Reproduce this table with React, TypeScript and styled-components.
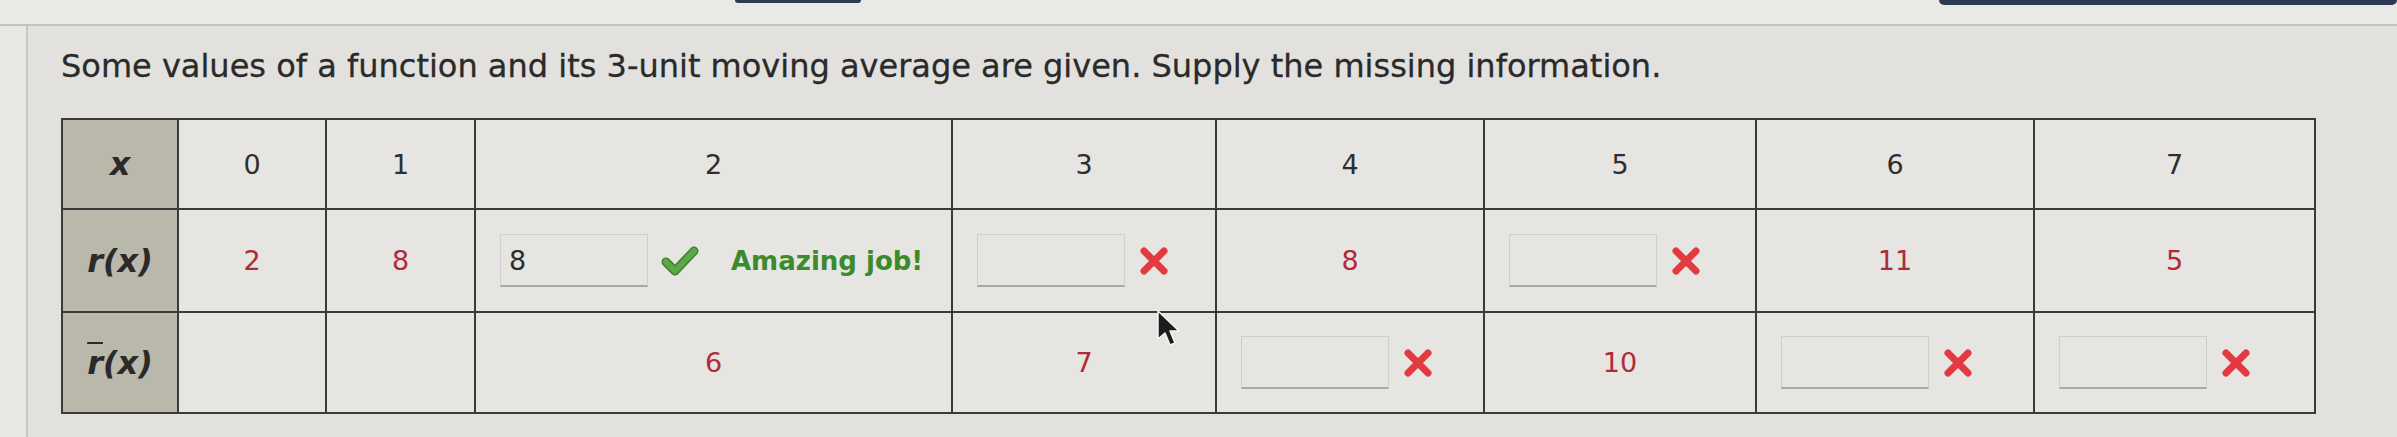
import React from "react";
import styled, { createGlobalStyle } from "styled-components";

const GlobalStyle = createGlobalStyle`
  html, body { margin: 0; padding: 0; background: #e2e1dd; }
  body { font-family: "DejaVu Sans", Verdana, sans-serif; color: #2e2e2e; }
`;

const Page = styled.div`
  width: 2397px;
  height: 437px;
  overflow: hidden;
  display: flex;
  flex-direction: column;
`;

const TopStrip = styled.div`
  height: 24px;
  flex: none;
  display: flex;
  align-items: flex-start;
  background: #e9e9e6;
  border-bottom: 2px solid #c2c2be;
`;

const Tab = styled.div<{ $left: number; $width: number; $h: number }>`
  margin-left: ${(p) => p.$left}px;
  width: ${(p) => p.$width}px;
  height: ${(p) => p.$h}px;
  background: #2d3a54;
  border-radius: 0 0 6px 6px;
`;

const Body = styled.div`
  flex: 1;
  display: flex;
`;

const Rail = styled.div`
  width: 26px;
  flex: none;
  background: #e7e7e4;
  border-right: 2px solid #c6c6c2;
`;

const Content = styled.div`
  padding-left: 33px;
  padding-top: 24px;
`;

const Prompt = styled.div`
  font-size: 32px;
  line-height: 32px;
  color: #2a2a2a;
  white-space: nowrap;
  -webkit-text-stroke: 0.3px #2a2a2a;
`;

const Table = styled.table`
  margin-top: 36px;
  border-collapse: collapse;
  table-layout: fixed;
  width: 2253px;
  border: 2px solid #3a3a3a;
`;

const Row = styled.tr<{ $h: number }>`
  height: ${(p) => p.$h}px;
`;

const HeadCell = styled.td`
  background: #bab7ab;
  border: 2px solid #3a3a3a;
  text-align: center;
  font-weight: bold;
  font-style: italic;
  font-size: 32px;
  color: #2a2a2a;
  padding: 0;
`;

const Cell = styled.td<{ $red?: boolean }>`
  position: relative;
  background: #e6e5e1;
  border: 2px solid #3a3a3a;
  text-align: center;
  font-size: 27px;
  color: ${(p) => (p.$red ? "#b02a3c" : "#2e2e2e")};
  padding: 0;
`;

const Answer = styled.div`
  display: flex;
  align-items: center;
  padding-left: 24px;
`;

const Box = styled.input`
  width: 148px;
  height: 53px;
  box-sizing: border-box;
  background: transparent;
  border: 1px solid #cfcfcb;
  border-bottom: 2px solid #a8a8a4;
  font-family: "DejaVu Sans", Verdana, sans-serif;
  font-size: 27px;
  color: #2e2e2e;
  padding: 0 8px;
  margin: 0;
  outline: none;
`;

const Mark = styled.svg`
  margin-left: 13px;
  flex: none;
`;

const Praise = styled.span`
  margin-left: 32px;
  font-weight: bold;
  font-size: 26px;
  color: #3b8a2c;
`;

const Bar = styled.span`
  text-decoration: overline;
  text-decoration-thickness: 2px;
`;

const Pointer = styled.svg`
  position: absolute;
  left: 203px;
  top: -4px;
`;

const Check = () => (
  <Mark width="38" height="30" viewBox="0 0 38 30">
    <path d="M5 16 L14 25 L33 5" fill="none" stroke="#3f7f31" strokeWidth="9" strokeLinecap="round" strokeLinejoin="round" />
    <path d="M5 16 L14 25 L33 5" fill="none" stroke="#5aa847" strokeWidth="6" strokeLinecap="round" strokeLinejoin="round" />
  </Mark>
);

const Cross = () => (
  <Mark width="32" height="32" viewBox="0 0 32 32">
    <path d="M6 6 L26 26 M26 6 L6 26" fill="none" stroke="#e23a40" strokeWidth="7" strokeLinecap="round" />
  </Mark>
);

const Wrong = () => (
  <Answer>
    <Box readOnly defaultValue="" />
    <Cross />
  </Answer>
);

const widths = [116, 148, 149, 477, 264, 268, 272, 278, 281];

export default function App() {
  return (
    <Page>
      <GlobalStyle />
      <TopStrip>
        <Tab $left={735} $width={127} $h={3} />
        <Tab $left={1078} $width={460} $h={5} />
      </TopStrip>
      <Body>
        <Rail />
        <Content>
          <Prompt>
            Some values of a function and its 3-unit moving average are given. Supply the missing information.
          </Prompt>
          <Table>
            <colgroup>
              {widths.map((w, i) => (
                <col key={i} style={{ width: w }} />
              ))}
            </colgroup>
            <tbody>
              <Row $h={90}>
                <HeadCell>x</HeadCell>
                {[0, 1, 2, 3, 4, 5, 6, 7].map((n) => (
                  <Cell key={n}>{n}</Cell>
                ))}
              </Row>
              <Row $h={103}>
                <HeadCell>r(x)</HeadCell>
                <Cell $red>2</Cell>
                <Cell $red>8</Cell>
                <Cell>
                  <Answer>
                    <Box readOnly defaultValue="8" />
                    <Check />
                    <Praise>Amazing job!</Praise>
                  </Answer>
                </Cell>
                <Cell>
                  <Wrong />
                </Cell>
                <Cell $red>8</Cell>
                <Cell>
                  <Wrong />
                </Cell>
                <Cell $red>11</Cell>
                <Cell $red>5</Cell>
              </Row>
              <Row $h={101}>
                <HeadCell>
                  <Bar>r</Bar>(x)
                </HeadCell>
                <Cell />
                <Cell />
                <Cell $red>6</Cell>
                <Cell $red>
                  7
                  <Pointer width="26" height="40" viewBox="0 0 26 40">
                    <path d="M2 2 L2 30 L9 24 L14 36 L19 34 L14 22 L23 22 Z" fill="#1c1c1c" stroke="#f4f4f4" strokeWidth="1.5" strokeLinejoin="round" />
                  </Pointer>
                </Cell>
                <Cell>
                  <Wrong />
                </Cell>
                <Cell $red>10</Cell>
                <Cell>
                  <Wrong />
                </Cell>
                <Cell>
                  <Wrong />
                </Cell>
              </Row>
            </tbody>
          </Table>
        </Content>
      </Body>
    </Page>
  );
}
